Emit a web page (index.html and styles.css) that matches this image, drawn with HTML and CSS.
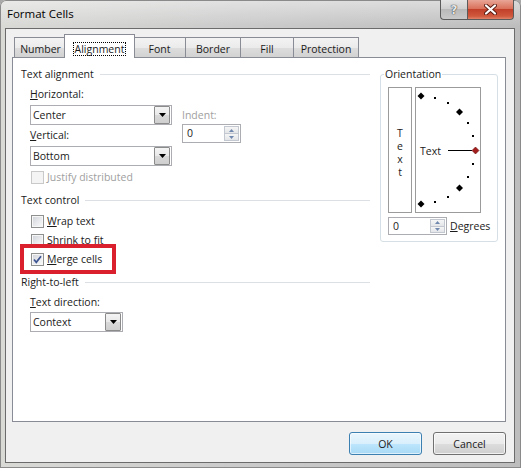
FILE: index.html
```html
<!DOCTYPE html>
<html lang="en">
<head>
<meta charset="utf-8">
<title>Format Cells</title>
<link rel="stylesheet" href="styles.css">
</head>
<body>
<div class="window">
  <div class="titlebar">
    <span class="title">Format Cells</span>
    <div class="caption">
      <div class="cap-btn cap-help">?</div>
      <div class="cap-btn cap-close">
        <svg width="13" height="11" viewBox="0 0 13 11">
          <path d="M2 1.5L11 9.5M11 1.5L2 9.5" stroke="#5a1a10" stroke-width="4" stroke-linecap="round"/>
          <path d="M2 1.5L11 9.5M11 1.5L2 9.5" stroke="#ffffff" stroke-width="2.2" stroke-linecap="round"/>
        </svg>
      </div>
    </div>
  </div>

  <div class="client">
    <div class="tabs">
      <div class="tab t-number">Number</div>
      <div class="tab t-align active"><span class="focus">Alignment</span></div>
      <div class="tab t-font">Font</div>
      <div class="tab t-border">Border</div>
      <div class="tab t-fill">Fill</div>
      <div class="tab t-protect">Protection</div>
    </div>

    <div class="panel">
      <div class="col-left">
        <div class="group-head">Text alignment</div>
        <div class="align-grid">
          <div class="align-left">
            <div class="label"><u>H</u>orizontal:</div>
            <div class="select sel-wide">
              <span class="sel-val">Center</span>
              <span class="drop"><svg width="7" height="4" viewBox="0 0 7 4"><path d="M0 0H7L3.5 4Z"/></svg></span>
            </div>
            <div class="label lab-v"><u>V</u>ertical:</div>
            <div class="select sel-wide">
              <span class="sel-val">Bottom</span>
              <span class="drop"><svg width="7" height="4" viewBox="0 0 7 4"><path d="M0 0H7L3.5 4Z"/></svg></span>
            </div>
          </div>
          <div class="align-right">
            <div class="label disabled">Indent:</div>
            <div class="spin spin-indent">
              <span class="spin-val">0</span>
              <span class="spin-btns">
                <span class="spin-btn"><svg width="5" height="3" viewBox="0 0 5 3"><path d="M0 3H5L2.5 0Z"/></svg></span>
                <span class="spin-btn"><svg width="5" height="3" viewBox="0 0 5 3"><path d="M0 0H5L2.5 3Z"/></svg></span>
              </span>
            </div>
          </div>
        </div>
        <div class="check-row disabled r-justify"><span class="box"></span><span>Justify distributed</span></div>

        <div class="group-head gh-control">Text control</div>
        <div class="check-row r-wrap"><span class="box"></span><span><u>W</u>rap text</span></div>
        <div class="check-row r-shrink"><span class="box"></span><span>Shrin<u>k</u> to fit</span></div>
        <div class="check-row r-merge">
          <span class="box checked"><svg width="11" height="11" viewBox="0 0 11 11"><path d="M2 5.5L4.3 8.3L9 2.2" fill="none" stroke="#3d5492" stroke-width="1.7"/></svg></span>
          <span><u>M</u>erge cells</span>
          <span class="highlight"></span>
        </div>

        <div class="group-head gh-rtl">Right-to-left</div>
        <div class="label lab-dir"><u>T</u>ext direction:</div>
        <div class="select sel-ctx">
          <span class="sel-val">Context</span>
          <span class="drop"><svg width="7" height="4" viewBox="0 0 7 4"><path d="M0 0H7L3.5 4Z"/></svg></span>
        </div>
      </div>

      <fieldset class="orient">
        <legend>Orientation</legend>
        <div class="orient-row">
          <div class="vtext"><span>T</span><span>e</span><span>x</span><span>t</span></div>
          <div class="dial">
            <svg width="64" height="124" viewBox="0 0 64 124">
              <!-- dots every 15 degrees around a half circle, diamonds every 45 -->
              <g fill="#000">
                <rect x="18" y="9" width="2" height="2"/>
                <rect x="31" y="14" width="2" height="2"/>
                <rect x="51" y="34" width="2" height="2"/>
                <rect x="56" y="47" width="2" height="2"/>
                <rect x="56" y="75" width="2" height="2"/>
                <rect x="51" y="88" width="2" height="2"/>
                <rect x="31" y="108" width="2" height="2"/>
                <rect x="18" y="113" width="2" height="2"/>
                <path d="M5 4.5L8.5 8L5 11.5L1.5 8Z"/>
                <path d="M43.5 20.5L47 24L43.5 27.5L40 24Z"/>
                <path d="M43.5 96.5L47 100L43.5 103.5L40 100Z"/>
                <path d="M5 112.5L8.5 116L5 119.5L1.5 116Z"/>
              </g>
              <line x1="32" y1="62.5" x2="56" y2="62.5" stroke="#000" stroke-width="1"/>
              <path d="M59.5 59L63 62.5L59.5 66L56 62.5Z" fill="#a31d1d" stroke="#6b0f0f" stroke-width="0.6"/>
              <text x="4" y="66.5" class="dial-text">Text</text>
            </svg>
          </div>
        </div>
        <div class="deg-row">
          <div class="spin spin-deg">
            <span class="spin-val">0</span>
            <span class="spin-btns">
              <span class="spin-btn"><svg width="5" height="3" viewBox="0 0 5 3"><path d="M0 3H5L2.5 0Z"/></svg></span>
              <span class="spin-btn"><svg width="5" height="3" viewBox="0 0 5 3"><path d="M0 0H5L2.5 3Z"/></svg></span>
            </span>
          </div>
          <span class="label deg-label"><u>D</u>egrees</span>
        </div>
      </fieldset>
    </div>

    <div class="buttons">
      <button class="btn btn-default">OK</button>
      <button class="btn">Cancel</button>
    </div>
  </div>
</div>
</body>
</html>
```

FILE: styles.css
```css
* { box-sizing: border-box; }

html, body { margin: 0; padding: 0; }

body {
  width: 521px;
  height: 468px;
  overflow: hidden;
  background: #a8a8a8;
  font-family: "Open Sans", "Liberation Sans", sans-serif;
  font-size: 10.5px;
  color: #1b1b1b;
}

u { text-decoration-thickness: 1px; text-underline-offset: 1px; }

/* ---------- window frame ---------- */
.window {
  width: 521px;
  height: 468px;
  display: flex;
  flex-direction: column;
  padding: 0 6px 5px 5px;
  border-radius: 6px 6px 0 0;
  background:
    linear-gradient(180deg, rgba(255,255,255,0.45) 0, rgba(255,255,255,0) 26px),
    linear-gradient(90deg, #d9d9d6 0%, #cbcbcb 45%, #bdbdbd 100%);
  box-shadow: inset 0 0 0 1px #8a8a8a;
}

.titlebar {
  height: 28px;
  flex: none;
  display: flex;
  justify-content: space-between;
  align-items: flex-start;
}

.title {
  padding: 6px 0 0 2px;
  line-height: 16px;
  font-size: 11.5px;
  color: #000;
}

.caption {
  display: flex;
  margin-right: 1px;
}

.cap-btn {
  height: 20px;
  display: flex;
  align-items: center;
  justify-content: center;
  border: 1px solid #5b5b5b;
  border-top: none;
}

.cap-help {
  width: 27px;
  border-right: none;
  border-radius: 0 0 0 4px;
  background: linear-gradient(180deg, #e4e4e4 0%, #cfcfcf 45%, #b9b9b9 50%, #c9c9c9 100%);
  font-family: "DejaVu Sans", sans-serif;
  font-weight: bold;
  font-size: 12px;
  color: #e6e6e6;
  text-shadow: 0 0 1px #333, 0 0 1px #333;
}

.cap-close {
  width: 47px;
  border-radius: 0 0 4px 0;
  background: linear-gradient(180deg, #e9a596 0%, #d9715b 45%, #c2402a 50%, #d0583c 85%, #e0836a 100%);
}

/* ---------- client area ---------- */
.client {
  flex: 1;
  display: flex;
  flex-direction: column;
  border: 1px solid #6b6b6b;
  background: #f0f0f0;
  padding: 5px 8px 7px 6px;
}

/* ---------- tabs ---------- */
.tabs {
  height: 24px;
  flex: none;
  display: flex;
  align-items: flex-start;
  padding-left: 2px;
  margin-bottom: -1px;
  position: relative;
  z-index: 1;
}

.tab {
  height: 20px;
  margin-top: 3px;
  border: 1px solid #898c95;
  border-bottom: none;
  background: linear-gradient(180deg, #f3f3f3 0%, #ebebeb 50%, #dddddd 51%, #d2d2d2 100%);
  text-align: center;
  line-height: 16px;
  padding-top: 3px;
  color: #1b1b1b;
}

.t-number { width: 53px; }
.t-align { width: 71px; margin-left: -3px; }
.t-font { width: 53px; margin-left: -2px; }
.t-border { width: 56px; margin-left: -1px; }
.t-fill { width: 54px; margin-left: -1px; }
.t-protect { width: 66px; margin-left: -1px; }

.tab.active {
  height: 24px;
  margin-top: 0;
  background: #fff;
  padding-top: 6px;
  position: relative;
  z-index: 2;
}

.focus {
  display: inline-block;
  border: 1px dotted #000;
  line-height: 12px;
  padding: 0 1px;
}

/* ---------- tab page ---------- */
.panel {
  height: 365px;
  flex: none;
  display: flex;
  align-items: flex-start;
  gap: 10px;
  border: 1px solid #898c95;
  background: #fff;
  padding: 8px 0 0 8px;
}

.col-left {
  width: 349px;
  display: flex;
  flex-direction: column;
  align-items: flex-start;
}

.group-head {
  width: 100%;
  height: 16px;
  line-height: 16px;
  display: flex;
  align-items: center;
}

.group-head::after {
  content: "";
  flex: 1;
  height: 1px;
  margin-left: 6px;
  background: #dcdfe3;
}

.gh-control { margin-top: 7px; }
.gh-rtl { margin-top: 7px; }

.label { line-height: 16px; }
.label.disabled { color: #a0a0a0; }

.align-grid {
  display: flex;
  margin: 4px 0 0 9px;
}

.align-left {
  width: 142px;
  display: flex;
  flex-direction: column;
}

.align-left .select { margin-top: 3px; }
.lab-v { margin-top: 2px; }

.align-right {
  margin-left: 10px;
  padding-top: 21px;
}

/* drop-down list */
.select {
  height: 20px;
  display: flex;
  align-items: center;
  justify-content: space-between;
  border: 1px solid #abadb3;
  background: #fff;
  padding: 0 1px 0 2px;
}

.sel-wide { width: 142px; }

.sel-ctx {
  width: 93px;
  margin: 2px 0 0 9px;
}

.lab-dir { margin: 4px 0 0 9px; }

.sel-val { line-height: 16px; }

.drop {
  width: 16px;
  height: 18px;
  display: flex;
  align-items: center;
  justify-content: center;
  border: 1px solid #8b8b8b;
  border-radius: 1px;
  background: linear-gradient(180deg, #f4f4f4 0%, #e9e9e9 50%, #d9d9d9 51%, #cfcfcf 100%);
}

.drop svg path { fill: #000; }

/* spin box */
.spin {
  width: 59px;
  display: flex;
  align-items: stretch;
  justify-content: space-between;
  border: 1px solid #abadb3;
  background: #fff;
  padding: 1px;
}

.spin-indent { height: 19px; margin-top: 1px; }
.spin-deg { height: 18px; }

.spin-val {
  padding-left: 3px;
  line-height: 15px;
}

.spin-btns {
  width: 15px;
  display: flex;
  flex-direction: column;
  gap: 0;
}

.spin-btn {
  flex: 1;
  display: flex;
  align-items: center;
  justify-content: center;
  border: 1px solid #c3c8d0;
  background: linear-gradient(180deg, #f6f6f6, #e3e5e8);
}

.spin-btn + .spin-btn { border-top: none; }

.spin-btn svg path { fill: #7088ad; }

/* check boxes */
.check-row {
  position: relative;
  height: 16px;
  display: flex;
  align-items: center;
  gap: 3px;
  margin-left: 10px;
  line-height: 16px;
}

.check-row.disabled { color: #a0a0a0; }

.r-justify { margin-top: 3px; }
.r-wrap { margin-top: 5px; }
.r-shrink { margin-top: 3px; }
.r-merge { margin-top: 3px; }

.box {
  width: 13px;
  height: 13px;
  flex: none;
  display: flex;
  align-items: center;
  justify-content: center;
  border: 1px solid #8e8f8f;
  background: linear-gradient(135deg, #cdd1d7 0%, #e6e8eb 50%, #fbfbfb 100%);
  box-shadow: inset 0 0 0 1px #f7f7f7;
}

.check-row.disabled .box {
  border-color: #c9c9c9;
  background: #f4f4f4;
  box-shadow: none;
}

/* annotation frame drawn over the merge row */
.highlight {
  position: absolute;
  left: -11px;
  top: -7px;
  width: 96px;
  height: 30px;
  border: 4px solid #da1f2d;
}

/* ---------- orientation group ---------- */
.orient {
  width: 118px;
  margin: 0;
  padding: 5px 0 6px 7px;
  border: 1px solid #d5dfe5;
  border-radius: 3px;
  min-width: 0;
}

.orient legend {
  padding: 0 1px;
  margin-left: -4px;
  line-height: 16px;
}

.orient-row {
  display: flex;
  gap: 3px;
}

.vtext {
  width: 24px;
  height: 126px;
  border: 1px solid #9b9b9b;
  display: flex;
  flex-direction: column;
  align-items: center;
  justify-content: center;
  padding-top: 6px;
  line-height: 13px;
}

.dial {
  width: 66px;
  height: 126px;
  border: 1px solid #9b9b9b;
}

.dial svg { display: block; }

.dial-text {
  font-family: "Open Sans", "Liberation Sans", sans-serif;
  font-size: 10.5px;
  fill: #1b1b1b;
}

.deg-row {
  display: flex;
  align-items: center;
  margin-top: 4px;
  gap: 3px;
}

.deg-label { line-height: 16px; }

/* ---------- dialog buttons ---------- */
.buttons {
  display: flex;
  justify-content: flex-end;
  gap: 11px;
  margin-top: 10px;
}

.btn {
  width: 73px;
  height: 23px;
  margin: 0;
  padding: 0;
  font-family: "Open Sans", "Liberation Sans", sans-serif;
  font-size: 10.5px;
  color: #1b1b1b;
  border: 1px solid #707070;
  border-radius: 3px;
  background: linear-gradient(180deg, #f2f2f2 0%, #ebebeb 50%, #dddddd 51%, #cfcfcf 100%);
  box-shadow: inset 0 0 0 1px rgba(255,255,255,0.7);
}

.btn-default {
  border-color: #3c7fb1;
  background: linear-gradient(180deg, #eaf6fd 0%, #d9f0fc 50%, #bee6fd 51%, #a7d9f5 100%);
  box-shadow: inset 0 0 0 1px rgba(255,255,255,0.6);
}
```
